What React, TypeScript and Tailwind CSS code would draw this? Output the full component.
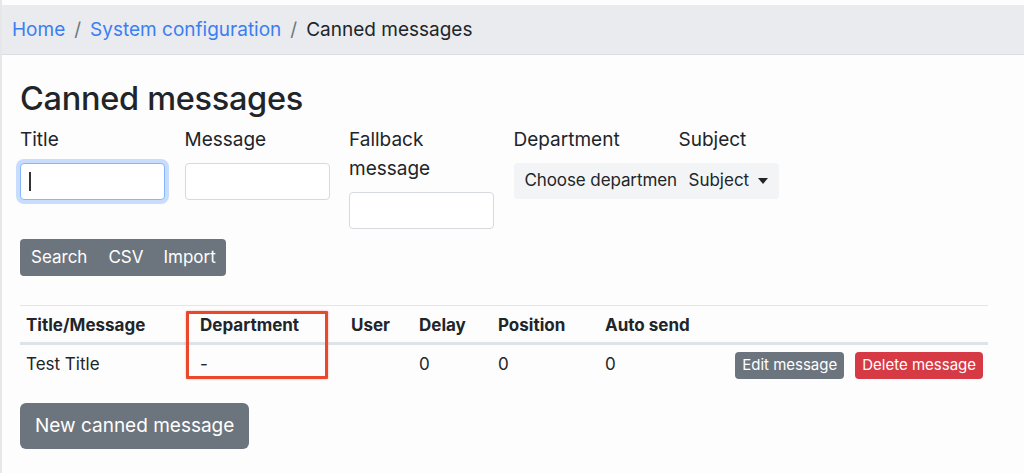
const HEADERS = ["Title/Message", "Department", "User", "Delay", "Position", "Auto send", ""];

function Field({ label, children }: { label: React.ReactNode; children: React.ReactNode }) {
  return (
    <div className="flex w-[145px] flex-col">
      <div className="text-[19px] leading-[29px]">{label}</div>
      <div className="mt-[9px]">{children}</div>
    </div>
  );
}

export default function App() {
  return (
    <div
      className="h-[473px] w-[1024px] overflow-hidden border-l-2 border-[#e6e7e9] bg-[#fdfdfd] text-[#212529]"
      style={{ fontFamily: "Inter, 'Liberation Sans', sans-serif" }}
    >
      {/* breadcrumb */}
      <nav className="mt-[5px] flex h-[50px] items-center gap-[9px] border-b border-[#dadde1] bg-[#e9ebee] px-[10px] pt-[2px] text-[19px]">
        <span className="text-[#3b7ef2]">Home</span>
        <span className="text-[#6c757d]">/</span>
        <span className="text-[#3b7ef2]">System configuration</span>
        <span className="text-[#6c757d]">/</span>
        <span>Canned messages</span>
      </nav>

      <div className="px-[18px]">
        <h1 className="mt-[22px] text-[32.5px] font-medium leading-[44px] tracking-[-0.3px]">Canned messages</h1>

        {/* filters */}
        <div className="mt-[4px] flex items-start gap-[19.5px]">
          <Field label="Title">
            <div className="relative h-[37px] rounded-[4px] border border-[#86b7fe] bg-white shadow-[0_0_0_4px_rgba(13,110,253,0.22)]">
              <div className="absolute left-[8px] top-[8px] h-[19px] w-[1.5px] bg-[#333]" />
            </div>
          </Field>
          <Field label="Message">
            <div className="h-[37px] rounded-[4px] border border-[#d6d9dd] bg-white" />
          </Field>
          <Field
            label={
              <>
                Fallback
                <br />
                message
              </>
            }
          >
            <div className="h-[37px] rounded-[4px] border border-[#d6d9dd] bg-white" />
          </Field>
          <div className="flex">
            <div className="flex w-[165px] flex-col">
              <div className="text-[19px] leading-[29px]">Department</div>
              <div className="mt-[9px] flex h-[36px] items-center overflow-hidden whitespace-nowrap rounded-l-[4px] bg-[#f3f4f6] pl-[11px] text-[17px] tracking-[-0.1px]">
                Choose departmen
              </div>
            </div>
            <div className="flex flex-col">
              <div className="text-[19px] leading-[29px]">Subject</div>
              <div className="mt-[9px] flex h-[36px] items-center gap-[9px] whitespace-nowrap rounded-r-[4px] bg-[#f3f4f6] pl-[10px] pr-[11px] text-[17px]">
                Subject
                <svg width="10" height="6" viewBox="0 0 10 6">
                  <path d="M0 0h10L5 6z" fill="#212529" />
                </svg>
              </div>
            </div>
          </div>
        </div>

        {/* button group */}
        <div className="mt-[10px] inline-flex h-[37px] items-center rounded-[4px] bg-[#6c757d] text-[17px] text-white">
          <span className="px-[11px]">Search</span>
          <span className="px-[10px]">CSV</span>
          <span className="px-[10px]">Import</span>
        </div>

        {/* table */}
        <div className="relative mt-[29px] w-[968px] border-t border-[#e3e5e8] text-[17px]">
          <div className="grid h-[39px] grid-cols-[174px_151px_68px_79px_107px_134px_1fr] items-center border-b-[3px] border-[#dfe2e6] pt-[3px] font-bold">
            {HEADERS.map((h, i) => (
              <div key={i} className="px-[6px]">
                {h}
              </div>
            ))}
          </div>
          <div className="grid h-[37px] grid-cols-[174px_151px_68px_79px_107px_134px_1fr] items-center pt-[3px]">
            <div className="px-[6px]">Test Title</div>
            <div className="px-[6px]">-</div>
            <div className="px-[6px]" />
            <div className="px-[6px]">0</div>
            <div className="px-[6px]">0</div>
            <div className="px-[6px]">0</div>
            <div className="flex justify-end gap-[11px] pr-[5px]">
              <button className="h-[27px] whitespace-nowrap rounded-[4px] bg-[#6c757d] px-[7px] text-[15px] text-white">
                Edit message
              </button>
              <button className="h-[27px] whitespace-nowrap rounded-[4px] bg-[#d63a45] px-[7px] text-[15px] text-white">
                Delete message
              </button>
            </div>
          </div>
          {/* annotation */}
          <div className="absolute left-[166px] top-[5px] h-[68px] w-[142px] rounded-[1px] border-[3px] border-[#e9482d] shadow-[0_0_2px_rgba(233,72,45,0.5)]" />
        </div>

        <button className="mt-[21px] h-[46px] whitespace-nowrap rounded-[6px] bg-[#6c757d] px-[15px] text-[19px] text-white">
          New canned message
        </button>
      </div>
    </div>
  );
}
